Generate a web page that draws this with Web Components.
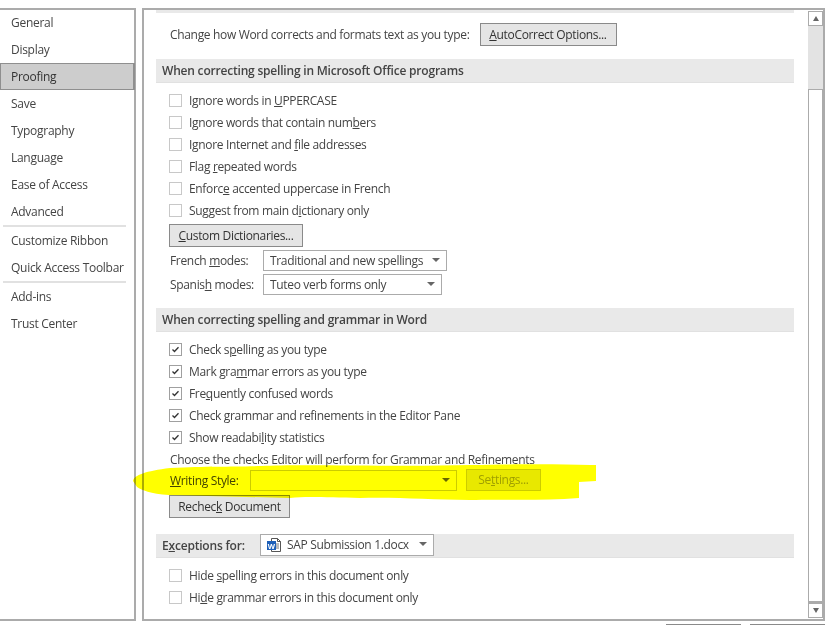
<!DOCTYPE html>
<html lang="en"><head><meta charset="utf-8"><title>Word Options - Proofing</title>
<style>
html,body{margin:0;padding:0;height:625px;overflow:hidden;background:#fff}
body{font:12px/16px "Open Sans","Noto Sans",sans-serif;color:#444;letter-spacing:-.28px}
u{text-underline-offset:1px}
</style></head><body>
<template id="t-item"><style>
:host{display:flex;align-items:center;height:27px;padding-left:11px;box-sizing:border-box;white-space:nowrap}
:host([selected]){background:#cdcdcd;border:solid #8f8f8f;border-width:1px 2px 1px 1px;padding-left:10px;color:#333;width:135px}
</style><span><slot></slot></span></template>
<template id="t-nav"><style>
:host{display:block;width:136px;height:613px;box-sizing:border-box;border:solid #ababab;border-width:2px 2px 2px 0;flex:none}
::slotted(hr){border:0;height:2px;background:#e1e1e1;margin:0 8px 0 3px}
::slotted(nav-item:first-child){margin-top:-1px}
</style><slot></slot></template>
<template id="t-head"><style>
:host{display:flex;align-items:center;gap:15px;width:638px;height:24px;box-sizing:border-box;background:#e9e9e9;border-bottom:1px solid #e1e1e1;padding-left:6px;font-weight:600;white-space:nowrap;letter-spacing:-.2px}
</style><slot></slot></template>
<template id="t-check"><style>
:host{display:flex;align-items:center;height:22px;gap:7px;margin-left:13px;white-space:nowrap;letter-spacing:-.33px}
.b{width:11px;height:11px;border:1px solid #c8c8c8;flex:none;display:block}
:host([on]) .b{border-color:#a0a0a0}
.l{padding-top:2px}
svg{display:none;width:11px;height:11px}
:host([on]) svg{display:block}
</style><span class="b"><svg viewBox="0 0 11 11"><path d="M2.5 5.5 4.5 7.5 8.5 3.2" fill="none" stroke="#333" stroke-width="1.3"/></svg></span><span class="l"><slot></slot></span></template>
<template id="t-btn"><style>
:host{display:inline-flex;align-items:center;justify-content:center;box-sizing:border-box;height:23px;background:#e5e5e5;border:1px solid #8a8a8a;color:#333;white-space:nowrap;letter-spacing:-.33px}
:host([disabled]){border-color:#ccc;color:#a0a0a0}
</style><span><slot></slot></span></template>
<template id="t-select"><style>
:host{display:inline-flex;align-items:center;box-sizing:border-box;height:21px;background:#fff;border:1px solid #ababab;padding-left:6px;white-space:nowrap;position:relative;color:#444;letter-spacing:-.33px}
:host([disabled]){border-color:#ccc}
i{position:absolute;right:6px;top:7px;width:0;height:0;border:solid transparent;border-width:4px 4px 0;border-top-color:#666}
</style><slot></slot><i></i></template>
<template id="t-scroll"><style>
:host{display:flex;flex-direction:column;width:15px;height:607px;background:#e3e3e3;flex:none;margin:1px 0 0 14px}
.a{height:15px;box-sizing:border-box;border:1px solid #ababab;background:#fff;display:flex;align-items:center;justify-content:center}
.t{margin-top:63px;flex:1;border:1px solid #ababab;border-bottom-width:2px;background:#fff;box-sizing:border-box}
i{width:0;height:0;border:solid transparent}
.u i{border-width:0 3.5px 5px;border-bottom-color:#666}
.d i{border-width:5px 3.5px 0;border-top-color:#666}
</style><div class="a u"><i></i></div><div class="t"></div><div class="a d"><i></i></div></template>
<template id="t-hl"><style>
:host{display:block;position:absolute;left:0;top:0;width:826px;height:625px;pointer-events:none;mix-blend-mode:multiply}
svg{display:block}
</style><svg width="826" height="625" viewBox="0 0 826 625"><path fill="#ffff00" d="M133 481C134 475 146 471 170 468C210 466 230 467 262 466C300 464 400 467 470 465C520 464 560 464 590 465L596 465 596 481 579 482 579 498C540 501 500 499 470 500C430 500 400 497 360 498C330 498 310 496 290 498L169 495C150 494 142 490 137 487Z"/></svg></template>

<word-options></word-options>
<template id="t-root"><style>
:host{display:block;position:relative;width:826px;height:625px;overflow:hidden}
.top{display:flex;gap:6px;padding-top:8px}
.main{display:flex;width:683px;height:613px;box-sizing:border-box;border:2px solid #ababab;padding-left:12px;overflow:hidden}
.c{width:638px;flex:none;display:flex;flex-direction:column;align-items:flex-start}
.foot{display:flex;gap:9px;justify-content:flex-end;padding-top:3px;margin-right:1px}
.foot b{display:block;width:75px;height:2px;background:#8a8a8a}
.frag{height:4px;width:638px;background:#e9e9e9;flex:none;margin-top:-1px}
.ln{display:flex;align-items:center;margin-left:13px;white-space:nowrap;letter-spacing:-.33px}
.lab{width:93px;margin-left:1px}
.tx{padding-top:2px}
</style>
<div class="top">
<opt-nav>
<nav-item>General</nav-item><nav-item>Display</nav-item><nav-item selected>Proofing</nav-item><nav-item>Save</nav-item><nav-item>Typography</nav-item><nav-item>Language</nav-item><nav-item>Ease of Access</nav-item><nav-item>Advanced</nav-item>
<hr><nav-item>Customize Ribbon</nav-item><nav-item>Quick Access Toolbar</nav-item>
<hr><nav-item>Add-ins</nav-item><nav-item>Trust Center</nav-item>
</opt-nav>
<div class="main">
<div class="c">
<div class="frag"></div>
<div class="ln" style="height:23px;margin-top:10px;gap:10px;margin-left:14px"><span>Change how Word corrects and formats text as you type:</span><opt-btn style="width:137px"><u>A</u>utoCorrect Options...</opt-btn></div>
<opt-head style="margin-top:13px">When correcting spelling in Microsoft Office programs</opt-head>
<div style="height:6px"></div>
<opt-check>Ignore words in <u>U</u>PPERCASE</opt-check>
<opt-check>Ignore words that contain num<u>b</u>ers</opt-check>
<opt-check>Ignore Internet and <u>f</u>ile addresses</opt-check>
<opt-check>Flag <u>r</u>epeated words</opt-check>
<opt-check>Enforc<u>e</u> accented uppercase in French</opt-check>
<opt-check>Suggest from main d<u>i</u>ctionary only</opt-check>
<opt-btn style="width:134px;margin:3px 0 0 13px"><u>C</u>ustom Dictionaries...</opt-btn>
<div class="ln" style="margin-top:3px"><span class="lab">French <u>m</u>odes:</span><opt-select style="width:184px">Traditional and new spellings</opt-select></div>
<div class="ln" style="margin-top:3px"><span class="lab">Spanis<u>h</u> modes:</span><opt-select style="width:179px">Tuteo verb forms only</opt-select></div>
<opt-head style="margin-top:13px">When correcting spelling and grammar in Word</opt-head>
<div style="height:6px"></div>
<opt-check on>Check s<u>p</u>elling as you type</opt-check>
<opt-check on>Mark gra<u>m</u>mar errors as you type</opt-check>
<opt-check on>Fre<u>q</u>uently confused words</opt-check>
<opt-check on>Check grammar and refinements in the Editor Pane</opt-check>
<opt-check on>Show readabi<u>l</u>ity statistics</opt-check>
<div class="ln" style="height:21px;margin-left:14px"><span class="tx">Choose the checks Editor will perform for Grammar and Refinements</span></div>
<div class="ln" style="height:22px;margin-left:14px"><span class="tx" style="width:80px"><u>W</u>riting Style:</span><opt-select disabled style="width:207px;height:21px"></opt-select><opt-btn disabled style="width:75px;height:22px;margin-left:9px;background:#e8e8e8">Se<u>t</u>tings...</opt-btn></div>
<opt-btn style="width:121px;margin:4px 0 0 13px">Rechec<u>k</u> Document</opt-btn>
<opt-head style="margin-top:16px;gap:0">
<span style="width:98px">E<u>x</u>ceptions for:</span>
<opt-select style="width:174px;height:22px;padding-left:5px;font-weight:400;margin-top:-1px"><svg width="17" height="16" viewBox="0 0 17 16" style="margin-right:4px;display:block;flex:none"><path d="M5.5 1.5h6l3 3v10h-9z" fill="#fff" stroke="#555"/><path d="M11.5 1.5v3h3" fill="none" stroke="#555"/><path d="M10 7h3M10 9h3M10 11h3" stroke="#777"/><rect x="1" y="4" width="9" height="9" fill="#1d5fb8"/><text x="5.5" y="11.5" font-size="7.5" font-weight="700" fill="#fff" text-anchor="middle" letter-spacing="0">W</text></svg><span>SAP Submission 1.docx</span></opt-select>
</opt-head>
<div style="height:6px"></div>
<opt-check>Hide <u>s</u>pelling errors in this document only</opt-check>
<opt-check>Hi<u>d</u>e grammar errors in this document only</opt-check>
</div>
<opt-scroll></opt-scroll>
</div>
</div>
<div class="foot"><b></b><b></b></div>
<opt-highlight></opt-highlight>
</template>
<script>
const def=(n,t)=>customElements.define(n,class extends HTMLElement{constructor(){super();this.attachShadow({mode:"open"}).appendChild(document.getElementById(t).content.cloneNode(true))}});
def("nav-item","t-item");def("opt-nav","t-nav");def("opt-head","t-head");def("opt-check","t-check");def("opt-btn","t-btn");def("opt-select","t-select");def("opt-scroll","t-scroll");def("opt-highlight","t-hl");def("word-options","t-root");
</script>
</body></html>
